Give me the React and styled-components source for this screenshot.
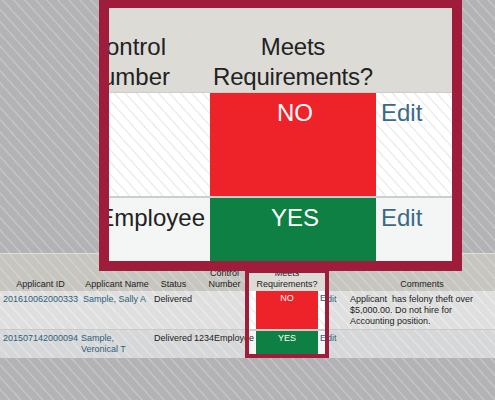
import React from "react";
import styled, { createGlobalStyle, css } from "styled-components";

const stripes = (base, light) => css`
  background-color: ${base};
  background-image: repeating-linear-gradient(
    48deg,
    ${base} 0,
    ${base} 6.2px,
    ${light} 6.6px,
    ${light} 7.8px,
    ${base} 8.2px
  );
`;

const Global = createGlobalStyle`
  html, body { margin: 0; padding: 0; width: 495px; height: 400px; overflow: hidden; }
  body { font-family: "Liberation Sans", Arial, sans-serif; }
`;

const Page = styled.div`
  position: relative;
  width: 495px;
  height: 400px;
  overflow: hidden;
  padding-top: 253px;
  box-sizing: border-box;
  ${stripes("#b3b3b5", "#c3c3c5")}
`;

const Table = styled.div`
  font-size: 9px;
  line-height: 11px;
  color: #222;
`;

const columns = "81px 72px 41px 20px 41px 65px 29px 146px";

const HeadRow = styled.div`
  display: grid;
  grid-template-columns: ${columns};
  height: 38px;
  border-top: 1px solid #dededa;
  box-sizing: border-box;
  align-items: end;
  text-align: center;
  padding-bottom: 1px;
  ${stripes("#c6c5c0", "#d1d0cb")}
`;

const HeadCell = styled.div`
  grid-column: span ${(p) => p.$span || 1};
`;

const Row = styled.div`
  display: grid;
  grid-template-columns: ${columns};
  height: ${(p) => p.$h}px;
  box-sizing: border-box;
  padding-top: ${(p) => p.$pt}px;
  ${(p) => (p.$alt ? stripes("#d6d7d9", "#e0e1e3") : stripes("#dfdfdf", "#e9e9e9"))}
  border-bottom: ${(p) => (p.$alt ? "none" : "1px solid #c9c9c7")};
`;

const Cell = styled.div`
  padding-left: ${(p) => p.$pad ?? 0}px;
  white-space: ${(p) => (p.$wrap ? "normal" : "nowrap")};
`;

const Link = styled.span`
  color: #2f5f7c;
`;

const Frame = styled.div`
  position: absolute;
  left: ${(p) => p.$x}px;
  top: ${(p) => p.$y}px;
  width: ${(p) => p.$w}px;
  height: ${(p) => p.$h}px;
  box-sizing: border-box;
  border: ${(p) => p.$b}px solid #9f1c3b;
  background: #f4f6f5;
  overflow: hidden;
  color: #222;
  font-size: ${(p) => p.$fs}px;
  line-height: ${(p) => p.$lh}px;
  z-index: ${(p) => p.$z};
`;

const Zoomed = styled.div`
  display: grid;
  height: 100%;
  grid-template-columns: ${(p) => p.$cols};
  grid-template-rows: ${(p) => p.$rows};
`;

const ZHead = styled.div`
  display: flex;
  align-items: flex-end;
  justify-content: ${(p) => (p.$end ? "flex-end" : "center")};
  text-align: center;
  background: #dcdbd6;
  padding: 0 ${(p) => p.$pr ?? 0}px ${(p) => p.$pb}px 0;
  letter-spacing: ${(p) => p.$ls ?? 0}px;
  white-space: nowrap;
  overflow: hidden;
  border-bottom: ${(p) => p.$line}px solid #cdcdcb;
`;

const ZBlank = styled.div`
  display: flex;
  justify-content: flex-end;
  white-space: nowrap;
  overflow: hidden;
  padding: ${(p) => p.$pt ?? 0}px ${(p) => p.$pr ?? 0}px 0 0;
  border-bottom: ${(p) => p.$line ?? 0}px solid #cdcdcb;
  ${(p) => (p.$white ? stripes("#ffffff", "#eeeeee") : "")}
`;

const Verdict = styled.div`
  color: #fff;
  text-align: center;
  background: ${(p) => (p.$ok ? "#0f8043" : "#ee2329")};
  padding-top: ${(p) => p.$pt}px;
  padding-left: ${(p) => p.$pl ?? 0}px;
  border-bottom: ${(p) => p.$line ?? 0}px solid #cdcdcb;
`;

const ZEdit = styled.div`
  color: ${(p) => p.$color || "#3a6a85"};
  white-space: nowrap;
  overflow: hidden;
  padding: ${(p) => p.$pt}px 0 0 ${(p) => p.$pl}px;
  border-bottom: ${(p) => p.$line ?? 0}px solid #cdcdcb;
  ${(p) => (p.$white ? stripes("#ffffff", "#eeeeee") : "")}
`;

export default function App() {
  return (
    <Page>
      <Global />
      <Table>
        <HeadRow>
          <HeadCell>Applicant ID</HeadCell>
          <HeadCell>Applicant Name</HeadCell>
          <HeadCell>Status</HeadCell>
          <HeadCell $span={2}>Control<br />Number</HeadCell>
          <HeadCell>Meets<br />Requirements?</HeadCell>
          <HeadCell />
          <HeadCell>Comments</HeadCell>
        </HeadRow>
        <Row $h={39} $pt={3}>
          <Cell $pad={3}><Link>201610062000333</Link></Cell>
          <Cell $pad={2}><Link>Sample, Sally A</Link></Cell>
          <Cell $pad={1}>Delivered</Cell>
          <Cell />
          <Cell />
          <Cell />
          <Cell $pad={1}><Link>Edit</Link></Cell>
          <Cell $pad={1} $wrap>Applicant&nbsp; has felony theft over $5,000.00. Do not hire for Accounting position.</Cell>
        </Row>
        <Row $h={28} $alt $pt={3}>
          <Cell $pad={3}><Link>201507142000094</Link></Cell>
          <Cell $wrap><Link>Sample,<br />Veronical T</Link></Cell>
          <Cell $pad={1}>Delivered</Cell>
          <Cell>1234</Cell>
          <Cell>Employee</Cell>
          <Cell />
          <Cell $pad={1}><Link>Edit</Link></Cell>
          <Cell />
        </Row>
      </Table>

      <Frame $x={245} $y={269} $w={84} $h={89} $b={4} $fs={9} $lh={11} $z={1}>
        <Zoomed $cols="7px 62px 7px" $rows="18px 40px 23px">
          <ZHead $pb={1} $line={0} />
          <ZHead $pb={1} $line={0}>Meets<br />Requirements?</ZHead>
          <ZHead $pb={1} $line={0} />
          <ZBlank $white $line={2} />
          <Verdict $pt={2} $line={2}>NO</Verdict>
          <ZEdit $white $color="#2f5f7c" $pt={2} $pl={2} $line={2}>Edit</ZEdit>
          <ZBlank $pt={2} $pr={2}>Employee</ZBlank>
          <Verdict $ok $pt={2}>YES</Verdict>
          <ZEdit $color="#2f5f7c" $pt={2} $pl={2}>Edit</ZEdit>
        </Zoomed>
      </Frame>

      <Frame $x={99} $y={-2} $w={363} $h={273} $b={10} $fs={24} $lh={30} $z={2}>
        <Zoomed $cols="101px 166px 76px" $rows="85px 105px 63px">
          <ZHead $end $pr={40} $pb={0} $line={1}>Control<br />Number</ZHead>
          <ZHead $pb={0} $line={1} $ls={-0.22}>Meets<br />Requirements?</ZHead>
          <ZHead $pb={0} $line={1} />
          <ZBlank $white $line={2} />
          <Verdict $pt={5} $pl={4} $line={2}>NO</Verdict>
          <ZEdit $white $pt={5} $pl={5} $line={2}>Edit</ZEdit>
          <ZBlank $pt={5} $pr={5}>Employee</ZBlank>
          <Verdict $ok $pt={5} $pl={4}>YES</Verdict>
          <ZEdit $pt={5} $pl={5}>Edit</ZEdit>
        </Zoomed>
      </Frame>
    </Page>
  );
}
